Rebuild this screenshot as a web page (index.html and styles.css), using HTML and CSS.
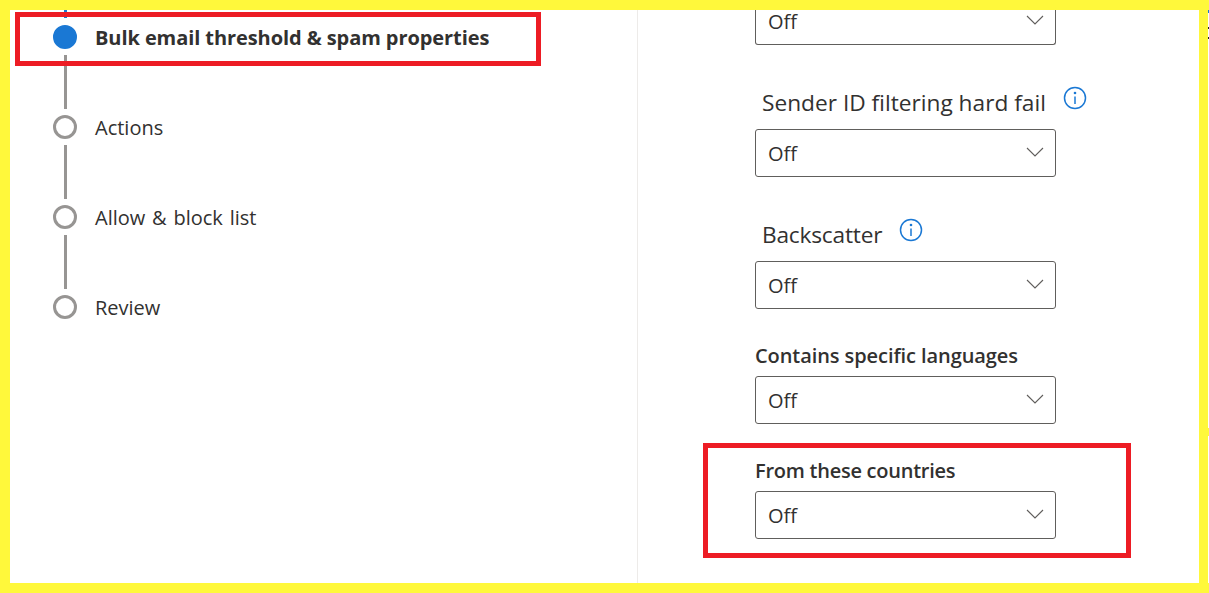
FILE: index.html
```html
<!DOCTYPE html>
<html lang="en">
<head>
<meta charset="utf-8">
<title>Bulk email threshold &amp; spam properties</title>
<link rel="stylesheet" href="styles.css">
</head>
<body>
<main class="frame">
  <nav class="steps">
    <div class="stub"></div>
    <div class="step current"><span class="node"></span><span class="step-label">Bulk email threshold &amp; spam properties</span></div>
    <div class="rail"></div>
    <div class="step"><span class="node"></span><span class="step-label">Actions</span></div>
    <div class="rail"></div>
    <div class="step"><span class="node"></span><span class="step-label">Allow &amp; block list</span></div>
    <div class="rail"></div>
    <div class="step"><span class="node"></span><span class="step-label">Review</span></div>
  </nav>
  <section class="form">
    <div class="select first"><span>Off</span><svg class="chev" viewBox="0 0 18 10"><path d="M1 1l8 8 8-8"/></svg></div>

    <div class="label-row sender"><span class="label-light">Sender ID filtering hard fail</span><svg class="info" viewBox="0 0 24 24"><circle cx="12" cy="12" r="10.5"/><path d="M12 10.5v7.5"/><circle class="dot" cx="12" cy="7" r="1.3"/></svg></div>
    <div class="select"><span>Off</span><svg class="chev" viewBox="0 0 18 10"><path d="M1 1l8 8 8-8"/></svg></div>

    <div class="label-row backscatter"><span class="label-light">Backscatter</span><svg class="info" viewBox="0 0 24 24"><circle cx="12" cy="12" r="10.5"/><path d="M12 10.5v7.5"/><circle class="dot" cx="12" cy="7" r="1.3"/></svg></div>
    <div class="select"><span>Off</span><svg class="chev" viewBox="0 0 18 10"><path d="M1 1l8 8 8-8"/></svg></div>

    <div class="label-strong languages">Contains specific languages</div>
    <div class="select"><span>Off</span><svg class="chev" viewBox="0 0 18 10"><path d="M1 1l8 8 8-8"/></svg></div>

    <div class="label-strong countries">From these countries</div>
    <div class="select"><span>Off</span><svg class="chev" viewBox="0 0 18 10"><path d="M1 1l8 8 8-8"/></svg></div>
  </section>
  <div class="callout callout-step"></div>
  <div class="callout callout-field"></div>
  <div class="edge"></div>
</main>
</body>
</html>
```
FILE: styles.css
```css
* { box-sizing: border-box; }
html, body { margin: 0; padding: 0; background: #fff; }
.frame {
  position: relative;
  width: 1208px;
  height: 593px;
  border-style: solid;
  border-color: #fff83b;
  border-width: 10px 9px 10px 10px;
  display: flex;
  background: #fff;
  font-family: "Open Sans", "Noto Sans", sans-serif;
  color: #323130;
}
.steps {
  width: 628px;
  flex: none;
  border-right: 1px solid #edebe9;
  padding-left: 43px;
  display: flex;
  flex-direction: column;
}
.stub { width: 3px; height: 8px; margin-left: 10.5px; margin-bottom: 7px; background: #1a78d4; }
.step { display: flex; align-items: center; gap: 18px; height: 24px; }
.node {
  width: 24px; height: 24px; flex: none;
  border-radius: 50%;
  border: 3px solid #979593;
  background: #fff;
}
.current .node { background: #1a78d4; border-color: #1a78d4; }
.step-label { font-size: 20px; white-space: nowrap; word-spacing: 1.6px; }
.current .step-label { font-weight: 700; word-spacing: 0; letter-spacing: -0.08px; }
.rail { width: 3px; height: 54px; margin: 6px 0 6px 10.5px; background: #979593; }
.form {
  flex: 1;
  padding-left: 117px;
  display: flex;
  flex-direction: column;
  align-items: flex-start;
}
.select {
  width: 301px; height: 48px; flex: none;
  border: 1px solid #605e5c;
  border-radius: 3px;
  display: flex;
  align-items: center;
  justify-content: space-between;
  padding: 0 11px 0 12px;
  font-size: 20px;
  background: #fff;
}
.select.first {
  height: 35px;
  border-top: 0;
  border-radius: 0 0 3px 3px;
  padding-bottom: 12px;
}
.chev { width: 18px; height: 10px; margin-top: -2px; fill: none; stroke: #605e5c; stroke-width: 1.1; }
.label-row { display: flex; align-items: flex-start; padding-left: 7px; }
.sender { margin-top: 40px; height: 44px; }
.backscatter { margin-top: 40px; height: 44px; }
.label-light { font-size: 22.7px; line-height: 31px; white-space: nowrap; margin-top: 2px; }
.backscatter .label-light { letter-spacing: -0.2px; }
.info { width: 24px; height: 24px; margin: 1px 0 0 17px; fill: none; stroke: #1a78d4; stroke-width: 1.5; }
.info .dot { fill: #1a78d4; stroke: none; }
.label-strong { font-size: 20px; font-weight: 600; line-height: 28px; white-space: nowrap; }
.languages { margin-top: 33px; margin-bottom: 6px; letter-spacing: -0.08px; }
.countries { margin-top: 33px; margin-bottom: 6px; letter-spacing: -0.25px; }
.callout { position: absolute; border: 5px solid #ed1c24; pointer-events: none; }
.callout-step { left: 5px; top: 2px; width: 526px; height: 54px; }
.callout-field { left: 693px; top: 433px; width: 428px; height: 115px; }
.edge {
  position: absolute;
  left: 1198px;
  top: -10px;
  width: 1px;
  height: 593px;
  background: linear-gradient(to bottom,
    #fff83b 0 10px, #1a78d4 10px 13px, #fff 13px 27px, #222 27px 29px, #fff 29px 37px, #222 37px 39px,
    #fff 39px 428px, #fff83b 428px 436px, #fff 436px 583px, #fff83b 583px 593px);
}
```
